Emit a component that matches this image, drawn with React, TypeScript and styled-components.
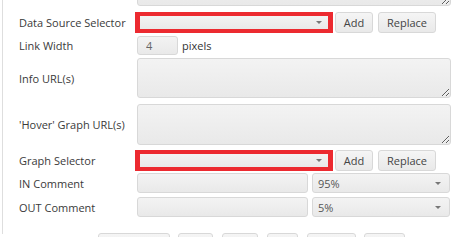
import React from "react";
import styled, { createGlobalStyle } from "styled-components";

const GlobalStyle = createGlobalStyle`
  html, body {
    margin: 0;
    padding: 0;
    background: #ffffff;
    overflow: hidden;
  }
  body {
    font-family: "Open Sans", "DejaVu Sans", sans-serif;
    font-size: 11px;
    color: #333;
  }
`;

const Page = styled.div`
  width: 474px;
  height: 237px;
  overflow: hidden;
`;

const Panel = styled.div`
  margin: -34px 0 0 2px;
  padding: 0 0 17px 16px;
  border-left: 1px solid #dedede;
  display: flex;
  flex-direction: column;
`;

const Row = styled.div<{ $h: number; $gap: number }>`
  display: flex;
  align-items: center;
  height: ${(p) => p.$h}px;
  margin-top: ${(p) => p.$gap}px;
`;

const Label = styled.div`
  width: 118px;
  flex: none;
  font-size: 11px;
  color: #3a3a3a;
  white-space: nowrap;
`;

const Controls = styled.div`
  display: flex;
  align-items: center;
  height: 100%;
`;

const fieldBg = `
  background: linear-gradient(#f3f3f3, #e9e9e9);
  border: 1px solid #d8d8d8;
  border-radius: 3px;
  box-sizing: border-box;
`;

const TextArea = styled.textarea`
  ${fieldBg}
  width: 314px;
  height: 100%;
  margin: 0;
  padding: 2px 4px;
  resize: both;
  font-family: inherit;
  font-size: 11px;
  outline: none;
`;

const Input = styled.input<{ $w: number }>`
  ${fieldBg}
  width: ${(p) => p.$w}px;
  height: 100%;
  margin: 0;
  padding: 0 8px;
  font-family: inherit;
  font-size: 11px;
  color: #666;
  outline: none;
`;

const Highlight = styled.div`
  box-sizing: border-box;
  width: 198px;
  height: 21px;
  margin-left: -2px;
  border: 5px solid #ec2a30;
  border-top-width: 4px;
  border-bottom-width: 4px;
  display: flex;
`;

const Select = styled.div<{ $w?: number }>`
  ${fieldBg}
  width: ${(p) => (p.$w ? `${p.$w}px` : "100%")};
  height: 100%;
  display: flex;
  align-items: center;
  justify-content: space-between;
  padding: 0 6px 0 5px;
  color: #555;
  font-size: 11px;
`;

const InnerSelect = styled(Select)`
  border: none;
  border-radius: 0;
  padding-right: 4px;
`;

const Arrow = styled.span`
  width: 0;
  height: 0;
  border-left: 3px solid transparent;
  border-right: 3px solid transparent;
  border-top: 3px solid #777;
  margin-right: 2px;
`;

const Button = styled.button<{ $w: number; $ml: number }>`
  width: ${(p) => p.$w}px;
  height: 21px;
  margin: 0 0 0 ${(p) => p.$ml}px;
  padding: 0;
  background: linear-gradient(#f5f5f5, #e9e9e9);
  border: 1px solid #d8d8d8;
  border-radius: 3px;
  font-family: inherit;
  font-size: 11px;
  color: #444;
  cursor: pointer;
`;

const Unit = styled.span`
  margin-left: 4px;
  font-size: 11px;
  color: #333;
`;

const Footer = styled.div`
  display: flex;
  align-items: flex-start;
  padding-left: 98px;
  margin-top: -1px;
`;

const FootButton = styled(Button)`
  height: 22px;
`;

// only the top edge of these buttons is in view, so their captions are not shown
const footerButtons = [
  { id: "submit", w: 72, ml: 0 },
  { id: "via", w: 35, ml: 8 },
  { id: "tidy", w: 36, ml: 9 },
  { id: "edit", w: 31, ml: 9 },
  { id: "delete", w: 49, ml: 9 },
  { id: "cancel", w: 41, ml: 8 },
];

const SelectorRow: React.FC<{ label: string; gap: number }> = ({ label, gap }) => (
  <Row $h={21} $gap={gap}>
    <Label>{label}</Label>
    <Controls>
      <Highlight>
        <InnerSelect>
          <span />
          <Arrow />
        </InnerSelect>
      </Highlight>
      <Button $w={38} $ml={2}>Add</Button>
      <Button $w={58} $ml={5}>Replace</Button>
    </Controls>
  </Row>
);

const CommentRow: React.FC<{ label: string; value: string; gap: number }> = ({
  label,
  value,
  gap,
}) => (
  <Row $h={20} $gap={gap}>
    <Label>{label}</Label>
    <Controls>
      <Input $w={171} />
      <Select $w={138} style={{ marginLeft: 4 }}>
        <span>{value}</span>
        <Arrow />
      </Select>
    </Controls>
  </Row>
);

export default function App() {
  return (
    <Page>
      <GlobalStyle />
      <Panel>
        <Row $h={40} $gap={0}>
          <Label />
          <Controls>
            <TextArea />
          </Controls>
        </Row>
        <SelectorRow label="Data Source Selector" gap={6} />
        <Row $h={19} $gap={3}>
          <Label>Link Width</Label>
          <Controls>
            <Input $w={41} defaultValue="4" />
            <Unit>pixels</Unit>
          </Controls>
        </Row>
        <Row $h={40} $gap={3}>
          <Label>Info URL(s)</Label>
          <Controls>
            <TextArea />
          </Controls>
        </Row>
        <Row $h={41} $gap={6}>
          <Label>'Hover' Graph URL(s)</Label>
          <Controls>
            <TextArea />
          </Controls>
        </Row>
        <SelectorRow label="Graph Selector" gap={5} />
        <CommentRow label="IN Comment" value="95%" gap={2} />
        <CommentRow label="OUT Comment" value="5%" gap={4} />
      </Panel>
      <Footer>
        {footerButtons.map((b) => (
          <FootButton key={b.id} $w={b.w} $ml={b.ml} aria-label={b.id} />
        ))}
      </Footer>
    </Page>
  );
}
